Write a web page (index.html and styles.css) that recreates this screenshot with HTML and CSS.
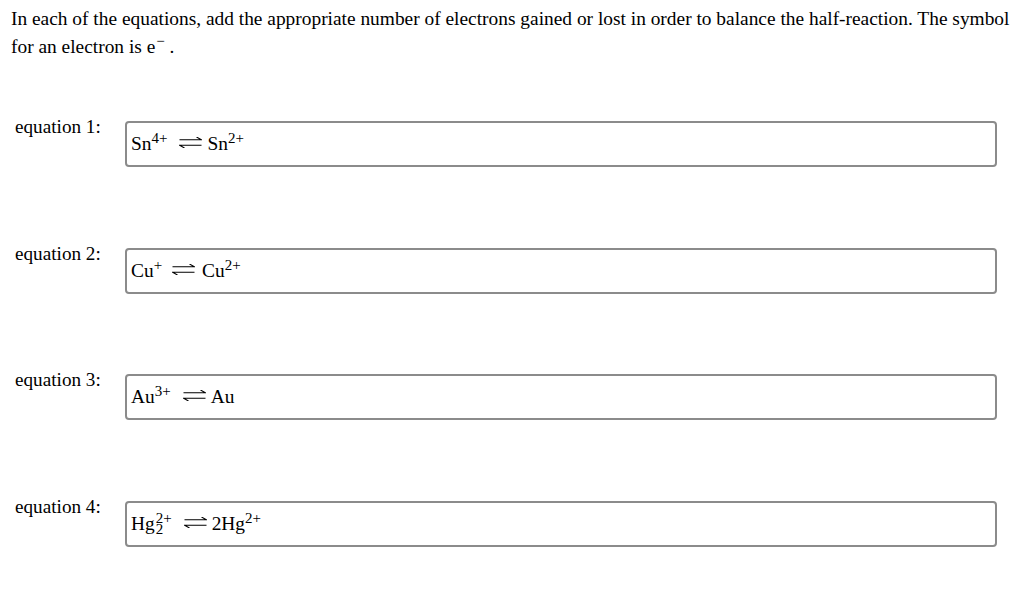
FILE: index.html
```html
<!DOCTYPE html>
<html>
<head>
<meta charset="utf-8">
<link rel="stylesheet" href="styles.css">
</head>
<body>
<div class="page">
  <p class="intro">In each of the equations, add the appropriate number of electrons gained or lost in order to balance the half-reaction. The symbol for an electron is e<sup class="esup">&minus;</sup>&nbsp;.</p>
  <div class="eqs">
    <div class="row">
      <div class="label">equation 1:</div>
      <div class="box"><span class="chem">Sn<sup>4+</sup></span><span class="arrow"><svg width="23" height="11" viewBox="0 0 23 11"><path d="M0.5 2.8H22.5L17.5 0" fill="none" stroke="#000" stroke-width="1.1"/><path d="M22.5 8.2H0.5L5.5 11" fill="none" stroke="#000" stroke-width="1.1"/></svg></span><span class="chem">Sn<sup>2+</sup></span></div>
    </div>
    <div class="row">
      <div class="label">equation 2:</div>
      <div class="box"><span class="chem">Cu<sup>+</sup></span><span class="arrow tight"><svg width="23" height="11" viewBox="0 0 23 11"><path d="M0.5 2.8H22.5L17.5 0" fill="none" stroke="#000" stroke-width="1.1"/><path d="M22.5 8.2H0.5L5.5 11" fill="none" stroke="#000" stroke-width="1.1"/></svg></span><span class="chem">Cu<sup>2+</sup></span></div>
    </div>
    <div class="row">
      <div class="label">equation 3:</div>
      <div class="box"><span class="chem">Au<sup>3+</sup></span><span class="arrow"><svg width="23" height="11" viewBox="0 0 23 11"><path d="M0.5 2.8H22.5L17.5 0" fill="none" stroke="#000" stroke-width="1.1"/><path d="M22.5 8.2H0.5L5.5 11" fill="none" stroke="#000" stroke-width="1.1"/></svg></span><span class="chem">Au</span></div>
    </div>
    <div class="row">
      <div class="label">equation 4:</div>
      <div class="box"><span class="chem">Hg<span class="subsup"><span class="ss-sup">2+</span><span class="ss-sub">2</span></span></span><span class="arrow"><svg width="23" height="11" viewBox="0 0 23 11"><path d="M0.5 2.8H22.5L17.5 0" fill="none" stroke="#000" stroke-width="1.1"/><path d="M22.5 8.2H0.5L5.5 11" fill="none" stroke="#000" stroke-width="1.1"/></svg></span><span class="chem">2Hg<sup>2+</sup></span></div>
    </div>
  </div>
</div>
</body>
</html>
```
FILE: styles.css
```css
html, body {
  margin: 0;
  padding: 0;
  background: #fff;
}
body {
  font-family: "Liberation Serif", "Times New Roman", serif;
  color: #000;
  font-size: 19.4px;
}
.page {
  padding: 5px 0 0 11px;
}
.intro {
  margin: 0;
  line-height: 28px;
  width: 1005px;
}
.esup {
  font-size: 15px;
  vertical-align: 7px;
  line-height: 0;
  padding-left: 1px;
}
.eqs {
  margin-top: 60px;
  display: flex;
  flex-direction: column;
  gap: 80.67px;
}
.row {
  display: flex;
  align-items: flex-start;
}
.label {
  width: 110px;
  padding-left: 4px;
  font-size: 19.2px;
  line-height: 22px;
  margin-top: -5px;
}
.box {
  width: 864px;
  height: 32px;
  border: 2px solid #8b8b8b;
  border-radius: 4px;
  padding: 10px 0 0 4px;
  font-size: 19.4px;
  line-height: 22px;
  white-space: nowrap;
}
.chem sup {
  font-size: 15px;
  vertical-align: 7px;
  line-height: 0;
}
.arrow {
  display: inline-block;
  margin: 0 5px 0 12px;
  vertical-align: 2px;
}
.arrow svg {
  display: block;
}
.arrow.tight {
  margin: 0 7px 0 10px;
}
.subsup {
  display: inline-flex;
  flex-direction: column;
  vertical-align: 7px;
  font-size: 15px;
  line-height: 11px;
  margin-left: 1px;
}
```
